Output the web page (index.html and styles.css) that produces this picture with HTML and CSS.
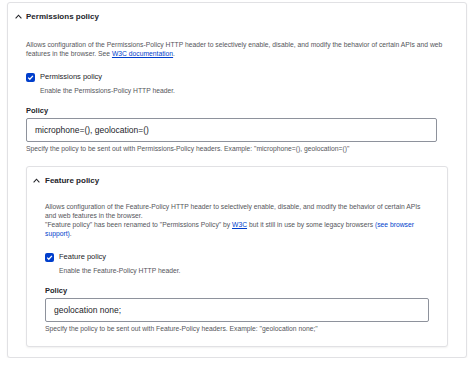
FILE: index.html
```html
<!DOCTYPE html>
<html lang="en">
<head>
  <meta charset="UTF-8">
  <title>Permissions policy</title>
  <link rel="stylesheet" href="styles.css">
</head>
<body>

  <div class="card">
    <div class="card-head">
      <svg class="chevron" width="7" height="5" viewBox="0 0 7 5"><polyline points="0.6,4.4 3.5,1.2 6.4,4.4" fill="none" stroke="#232429" stroke-width="1.1"/></svg>
      <span class="card-title">Permissions policy</span>
    </div>
    <div class="card-body">
      <p class="desc">Allows configuration of the Permissions-Policy HTTP header to selectively enable, disable, and modify the behavior of certain APIs and web<br>features in the browser. See <a href="#">W3C documentation</a>.</p>

      <div class="check-row">
        <span class="checkbox"><svg width="9" height="9" viewBox="0 0 9 9"><polyline points="2.2,4.6 3.8,6.2 6.9,2.9" fill="none" stroke="#fff" stroke-width="1.3"/></svg></span>
        <span class="check-label">Permissions policy</span>
      </div>
      <p class="desc check-desc">Enable the Permissions-Policy HTTP header.</p>

      <div class="field-label">Policy</div>
      <div class="input wide">microphone=(), geolocation=()</div>
      <p class="desc help">Specify the policy to be sent out with Permissions-Policy headers. Example: "microphone=(), geolocation=()"</p>

      <div class="card inner">
        <div class="card-head">
          <svg class="chevron" width="7" height="5" viewBox="0 0 7 5"><polyline points="0.6,4.4 3.5,1.2 6.4,4.4" fill="none" stroke="#232429" stroke-width="1.1"/></svg>
          <span class="card-title">Feature policy</span>
        </div>
        <div class="card-body">
          <p class="desc">Allows configuration of the Feature-Policy HTTP header to selectively enable, disable, and modify the behavior of certain APIs<br>and web features in the browser.<br>"Feature policy" has been renamed to "Permissions Policy" by <a href="#">W3C</a> but it still in use by some legacy browsers <a href="#" class="plain">(see browser</a><br><a href="#" class="plain">support)</a>.</p>

          <div class="check-row">
            <span class="checkbox"><svg width="9" height="9" viewBox="0 0 9 9"><polyline points="2.2,4.6 3.8,6.2 6.9,2.9" fill="none" stroke="#fff" stroke-width="1.3"/></svg></span>
            <span class="check-label">Feature policy</span>
          </div>
          <p class="desc check-desc">Enable the Feature-Policy HTTP header.</p>

          <div class="field-label">Policy</div>
          <div class="input">geolocation none;</div>
          <p class="desc help">Specify the policy to be sent out with Feature-Policy headers. Example: "geolocation none;"</p>
        </div>
      </div>
    </div>
  </div>

</body>
</html>
```

FILE: styles.css
```css
body {
  margin: 0;
  padding: 2px 7px 0;
  background: #fff;
  font-family: "Liberation Sans", Arial, sans-serif;
  color: #232429;
}

.card {
  border: 1px solid #e1e1e4;
  border-radius: 3px;
  box-shadow: 0 1px 2px rgba(0,0,0,0.06);
  background: #fff;
}

.card-head {
  height: 26px;
  display: flex;
  align-items: center;
  gap: 4px;
  padding-left: 7px;
}

.inner .card-head {
  padding-left: 6px;
  gap: 5px;
}

.chevron {
  display: block;
}

.card-title {
  font-size: 8px;
  font-weight: bold;
}

.card-body {
  padding: 11px 18px 10px;
}

.inner {
  margin-top: 13px;
}

.inner .card-body {
  padding: 9px 18px 13px;
}

.desc {
  margin: 0;
  font-size: 6.75px;
  line-height: 9px;
  color: #55565b;
}

.desc a {
  color: #003ecc;
}

.desc a.plain {
  text-decoration: none;
}

.check-row {
  display: flex;
  align-items: center;
  gap: 5px;
  height: 10px;
  margin-top: 14px;
}

.checkbox {
  width: 9px;
  height: 9px;
  border-radius: 2px;
  background: #003ecc;
  display: block;
}

.checkbox svg {
  display: block;
}

.check-label {
  font-size: 7.5px;
  line-height: 10px;
}

.check-desc {
  margin-top: 4px;
  padding-left: 14px;
}

.field-label {
  margin-top: 11px;
  font-size: 7.5px;
  line-height: 10px;
  font-weight: bold;
}

.input {
  margin-top: 2px;
  height: 24px;
  box-sizing: border-box;
  border: 1px solid #8e929c;
  border-radius: 2px;
  padding-left: 8px;
  display: flex;
  align-items: center;
  font-size: 8.5px;
  color: #232429;
}

.input.wide {
  width: 411px;
}

.help {
  margin-top: 2px;
}
```
